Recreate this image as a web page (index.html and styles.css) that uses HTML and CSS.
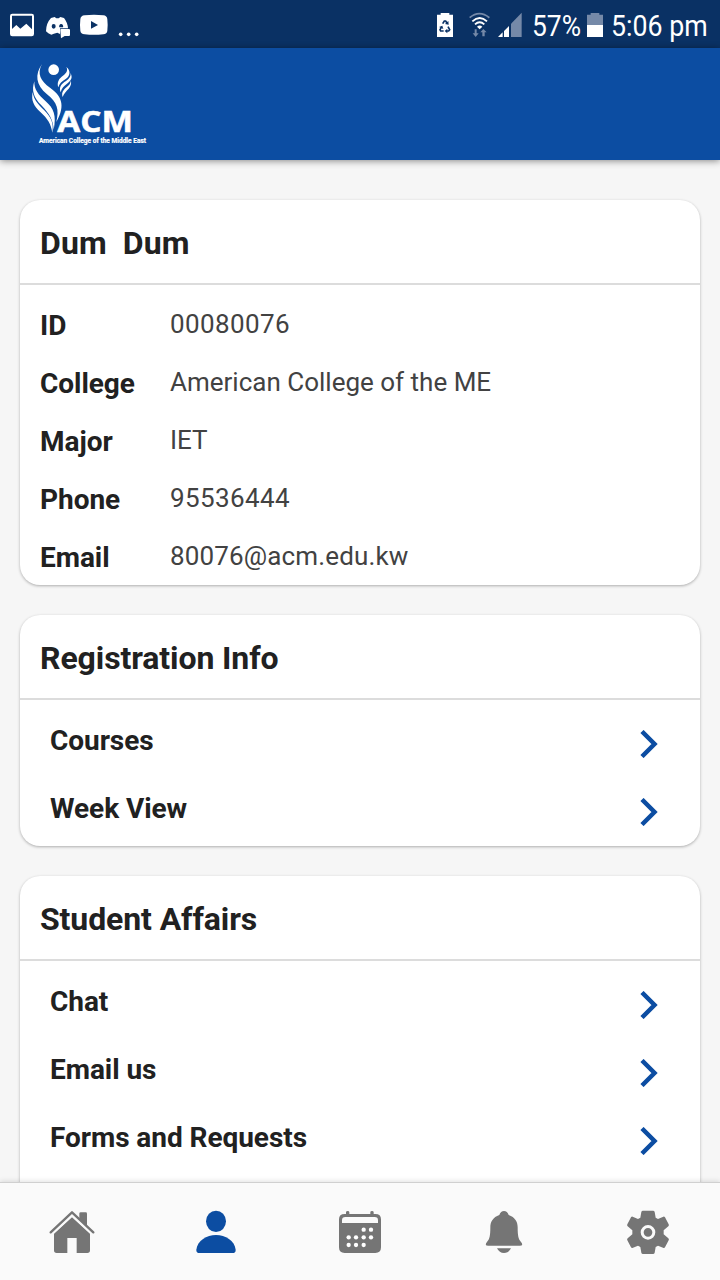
FILE: index.html
```html
<!DOCTYPE html>
<html lang="en">
<head>
<meta charset="utf-8">
<title>ACM Student</title>
<link rel="stylesheet" href="styles.css">
</head>
<body>
<div class="app">
  <div class="status">
    <svg class="status-left" viewBox="0 0 450 144" width="150" height="48">
      <path fill="#fff" fill-rule="evenodd" d="M37 41H95Q102 41 102 48V102Q102 109 95 109H37Q30 109 30 102V48Q30 41 37 41ZM36 47V87L49 75L61 86L79 71L96 88V47Z"/>
      <path fill="#fff" fill-rule="evenodd" d="M153 54L164 51L169 55H176L181 51L192 54Q203 68 204 85H180V102L172 98Q160 101 154 104Q144 101 138 94Q138 70 153 54ZM161 72A6 7 0 1 0 161 86A6 7 0 1 0 161 72ZM183 72A6 7 0 0 0 178 82H189A6 7 0 0 0 183 72Z"/>
      <path fill="#fff" d="M183 87H207Q210 87 210 90V105Q210 108 207 108H194L183 115L181 90Q181 87 183 87Z"/>
      <path fill="#fff" fill-rule="evenodd" d="M254 46Q282 43 310 46Q321 47 322 58Q324 75 322 92Q321 102 310 103Q282 106 254 103Q242 102 241 92Q239 75 241 58Q242 47 254 46ZM273 63V86L294 75Z"/>
      <g fill="#fff"><circle cx="362" cy="103" r="5.5"/><circle cx="386" cy="103" r="5.5"/><circle cx="410" cy="103" r="5.5"/></g>
    </svg>
    <svg class="status-right" viewBox="0 0 900 144" width="300" height="48">
      <path fill="#fff" d="M51 44H62V39H88V44H99V111H51Z"/>
      <g fill="none" stroke="#0a3164" stroke-width="5"><path d="M68 71L73 63H77L81 69M84 80L89 89L86 93H80M71 93H62L60 89L64 82"/></g>
      <path fill="#0a3164" d="M75 72L86 74L85 63ZM82 86V100L74 93ZM57 81L67 77L70 87Z"/>
      <g fill="none" stroke-width="5.5"><path stroke="#7589a8" d="M149 53Q178 29 208 53"/><path stroke="#fff" d="M157 64Q179 44 201 64M165 73Q179 60 193 73"/></g>
      <path fill="#fff" d="M171 80Q179 73 187 80L179 88Z"/>
      <path fill="#7589a8" d="M164 88H170V100H176L167 111L158 100H164ZM190 87L200 97H194V109H187V97H181Z"/>
      <path fill="#7589a8" d="M273 71L305 38V111H273Z"/><path fill="#fff" d="M234 111L248 97V111ZM252 93L267 78V111H252Z"/>
      <path fill="#7589a8" d="M501 44H512V39H538V44H549V75H501Z"/><path fill="#fff" d="M501 75H549V111H501Z"/>
      <g class="status-text"><text x="336" y="108" textLength="147" lengthAdjust="spacingAndGlyphs">57%</text><text x="573" y="108" textLength="290" lengthAdjust="spacingAndGlyphs">5:06 pm</text></g>
    </svg>
  </div>
  <header class="header">
    <svg viewBox="0 0 420 315" width="140" height="105">
      <g fill="#fff">
        <circle cx="101" cy="44" r="16"/>
        <path d="M66 27C50 56 62 78 90 98C122 121 139 148 109 201C118 163 112 143 81 118C47 90 44 58 66 27Z"/>
        <path d="M43 79C42 104 55 119 77 139C101 160 110 181 101 224C99 194 88 176 64 151C41 128 34 107 43 79Z"/>
        <path d="M38 111C42 137 55 148 72 165C92 185 102 202 97 233C93 207 83 191 61 171C41 152 33 137 38 111Z"/>
        <path d="M139 36C146 49 136 57 125 65C114 74 111 85 115 97C118 85 126 79 137 72C152 62 152 46 139 36Z"/>
        <path d="M151 53C155 65 144 74 133 81C121 90 117 99 122 112C125 99 132 93 141 86C154 76 159 67 151 53Z"/>
        <path d="M152 76C153 89 140 96 132 104C126 111 125 118 128 126C132 114 139 109 146 101C153 93 155 85 152 76Z"/>
      </g>
      <text class="logo-name" x="112" y="231" textLength="227" lengthAdjust="spacingAndGlyphs">ACM</text>
      <text class="logo-sub" x="57" y="263" textLength="321" lengthAdjust="spacingAndGlyphs">American College of the Middle East</text>
    </svg>
  </header>
  <main class="content">
    <section class="card profile">
      <h2 class="title name">Dum&nbsp; Dum</h2>
      <dl class="fields">
        <div class="field"><dt>ID</dt><dd class="digits">00080076</dd></div>
        <div class="field"><dt>College</dt><dd>American College of the ME</dd></div>
        <div class="field"><dt>Major</dt><dd>IET</dd></div>
        <div class="field"><dt>Phone</dt><dd class="digits">95536444</dd></div>
        <div class="field"><dt>Email</dt><dd class="mail">80076@acm.edu.kw</dd></div>
      </dl>
    </section>
    <section class="card">
      <h2 class="title">Registration Info</h2>
      <div class="menu">
        <div class="item"><span>Courses</span><svg class="chev" viewBox="0 0 18 28"><path d="M2 1.5L14.5 14L2 26.5"/></svg></div>
        <div class="item"><span>Week View</span><svg class="chev" viewBox="0 0 18 28"><path d="M2 1.5L14.5 14L2 26.5"/></svg></div>
      </div>
    </section>
    <section class="card affairs">
      <h2 class="title">Student Affairs</h2>
      <div class="menu">
        <div class="item"><span>Chat</span><svg class="chev" viewBox="0 0 18 28"><path d="M2 1.5L14.5 14L2 26.5"/></svg></div>
        <div class="item"><span>Email us</span><svg class="chev" viewBox="0 0 18 28"><path d="M2 1.5L14.5 14L2 26.5"/></svg></div>
        <div class="item"><span>Forms and Requests</span><svg class="chev" viewBox="0 0 18 28"><path d="M2 1.5L14.5 14L2 26.5"/></svg></div>
      </div>
    </section>
  </main>
  <nav class="tabs">
    <svg class="tab" viewBox="0 0 144 144">
      <path d="M18 74L72 25L126 74V124Q126 132 118 132H86V87H58V132H26Q18 132 18 124Z"/>
      <path class="roof" d="M7 70L72 9L137 70"/>
      <path d="M94 14Q94 10 98 10H113Q117 10 117 14V50L94 29Z"/>
      <path class="roof-line" d="M8 70L72 10L136 70"/>
    </svg>
    <svg class="tab active" viewBox="0 0 144 144"><ellipse cx="72" cy="37" rx="30" ry="32"/><path d="M13 122C16 95 44 78 72 78C100 78 128 95 131 122Q132 132 121 132H23Q12 132 13 122Z"/></svg>
    <svg class="tab" viewBox="0 0 144 144">
      <path fill-rule="evenodd" d="M26 15H30V10Q30 6 35 6T40 10V15H103V10Q103 6 108 6T113 10V15H118Q135 15 135 31V115Q135 132 118 132H26Q9 132 9 115V31Q9 15 26 15ZM18 42H126V34Q126 24 116 24H28Q18 24 18 34Z"/>
      <g fill="#fff"><circle cx="83" cy="62" r="6.5"/><circle cx="105" cy="62" r="6.5"/><circle cx="38" cy="85" r="6.5"/><circle cx="60" cy="85" r="6.5"/><circle cx="83" cy="85" r="6.5"/><circle cx="105" cy="85" r="6.5"/><circle cx="38" cy="108" r="6.5"/><circle cx="60" cy="108" r="6.5"/><circle cx="83" cy="108" r="6.5"/></g>
    </svg>
    <svg class="tab" viewBox="0 0 144 144"><path d="M58 18Q62 6 72 6T86 18C105 25 113 38 113 55C113 80 115 91 123 99Q132 110 119 110H25Q12 110 21 99C29 91 31 80 31 55C31 38 39 25 58 18ZM51 118H93Q86 132 72 132T51 118Z"/></svg>
    <svg class="tab" viewBox="0 0 144 144">
      <path d="M57 5H87Q91 5 92 9L95 26L102 30L118 23Q121 22 123 25L134 46Q136 49 133 52L119 64V76L133 88Q136 91 134 94L123 115Q121 118 117 116L102 110L95 114L92 131Q91 135 87 135H57Q53 135 52 131L49 114L42 110L27 116Q23 118 21 115L10 94Q8 91 11 88L25 76V64L11 52Q8 49 10 46L21 25Q23 22 26 23L42 30L49 26L52 9Q53 5 57 5Z"/>
      <circle cx="72" cy="70" r="17.5" fill="none" stroke="#fafafa" stroke-width="9"/>
    </svg>
  </nav>
</div>
</body>
</html>
```
FILE: styles.css
```css
* { box-sizing: border-box; }
body { margin: 0; font-family: Roboto, sans-serif; background: #f6f6f6; color: #212121; }
.app { width: 720px; height: 1280px; display: flex; flex-direction: column; overflow: hidden; }
.status { flex: none; height: 48px; background: #0a3164; display: flex; justify-content: space-between; }
.status-text { font-size: 90px; fill: #fff; }
.header { position: relative; flex: none; height: 112px; padding: 7px 0 0 20px; background: #0c4da2; box-shadow: 0 1px 7px rgba(0, 0, 0, .45); }
.header svg { display: block; }
.logo-name { font-family: "Open Sans", sans-serif; font-weight: 700; font-size: 84px; fill: #fff; stroke: #fff; stroke-width: 1.5; }
.logo-sub { font-family: Roboto, sans-serif; font-weight: 700; font-size: 19px; fill: #fff; stroke: #fff; stroke-width: .6; }
.content { flex: 1; min-height: 0; overflow: hidden; padding: 40px 20px 0; display: flex; flex-direction: column; gap: 30px; }
.card { flex: none; background: #fff; border-radius: 20px; box-shadow: 0 1px 3px rgba(0, 0, 0, .3); }
.affairs { height: 367px; }
.title { margin: 0; height: 85px; padding: 0 20px; border-bottom: 2px solid #dcdcdc; font-size: 32px; line-height: 86px; font-weight: 700; letter-spacing: -.1px; white-space: nowrap; }
.name { letter-spacing: .1px; }
.fields { margin: 0; padding: 11px 20px 0; height: 300px; }
.field { display: flex; height: 58px; line-height: 60px; white-space: nowrap; }
.field dt { width: 130px; font-size: 28px; font-weight: 700; letter-spacing: -.05px; }
.field dd { margin: 0; font-size: 26px; line-height: 56px; color: #424242; }
.field .digits { letter-spacing: .38px; }
.field .mail { letter-spacing: .14px; }
.menu { padding: 10px 42.5px 0 30px; }
.item { height: 68px; display: flex; justify-content: space-between; font-size: 28px; font-weight: 700; letter-spacing: -.06px; line-height: 62px; }
.chev { width: 18px; height: 28px; margin-top: 19.5px; fill: none; stroke: #0c4da2; stroke-width: 4.5; }
.tabs { flex: none; height: 98px; padding: 26px 0 0; background: #fafafa; border-top: 1px solid #d0d0d0; box-shadow: 0 -1px 5px rgba(0, 0, 0, .12); display: grid; grid-template-columns: repeat(5, 144px); justify-items: center; position: relative; }
.tab { width: 48px; height: 48px; fill: #757575; }
.tab.active { fill: #0c4da2; }
.roof { fill: none; stroke: #fafafa; stroke-width: 20; }
.roof-line { fill: none; stroke: #757575; stroke-width: 7; stroke-linecap: round; stroke-linejoin: round; }
```
